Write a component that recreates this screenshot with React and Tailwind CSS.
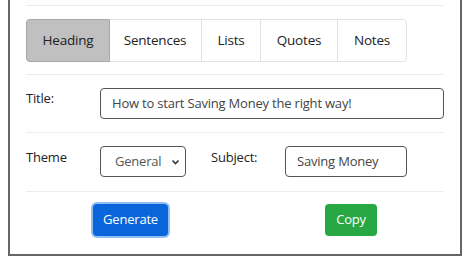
export default function App() {
  const tabs = [
    { label: "Heading", w: "w-[84px]", active: true },
    { label: "Sentences", w: "w-[93px]" },
    { label: "Lists", w: "w-[59px]" },
    { label: "Quotes", w: "w-[77px]" },
    { label: "Notes", w: "w-[68px]" },
  ];
  return (
    <div className="w-[474px] h-[270px] bg-white overflow-hidden text-[13px] tracking-[-0.2px] text-[#333]" style={{ fontFamily: '"Open Sans", "Noto Sans", sans-serif' }}>
      <div className="ml-[8px] w-[454px] h-[256px] border-x-2 border-b-2 border-[#666] border-t-0 pl-[16px] pr-[16px]">
        <div className="h-[6px] border-b border-[#ececec]"></div>
        <div className="pt-[13px] h-[69px] border-b border-[#ececec]">
          <div className="flex w-[381px] h-[43px] border border-[#e2e2e2] rounded-[4px]">
            {tabs.map((t, i) => (
              <div
                key={t.label}
                className={
                  t.w +
                  " flex items-center justify-center text-[13.5px] " +
                  (t.active
                    ? "bg-[#c0c0c0] border border-[#a8a8a8] rounded-l-[4px] -m-px h-[43px] text-[#222]"
                    : "text-[#222] " + (i < tabs.length - 1 ? "border-r border-[#e2e2e2]" : ""))
                }
              >
                {t.label}
              </div>
            ))}
          </div>
        </div>
        <div className="flex h-[58px] border-b border-[#ececec] pt-[13px]">
          <div className="w-[74px] pt-[1px] text-[#222]">Title:</div>
          <div className="w-[344px] h-[31px] border border-[#555] rounded-[4px] flex items-center pl-[11px] text-[#444]">
            How to start Saving Money the right way!
          </div>
        </div>
        <div className="flex h-[59px] border-b border-[#ececec] pt-[13px]">
          <div className="w-[74px] pt-[2px] text-[#222]">Theme</div>
          <div className="w-[86px] h-[31px] border border-[#555] rounded-[4px] flex items-center pl-[14px] text-[#555]">
            <span>General</span>
            <svg className="ml-[10px]" width="9" height="6" viewBox="0 0 9 6">
              <path d="M1.5 1.5 L4.5 4.5 L7.5 1.5" fill="none" stroke="#333" strokeWidth="1.6" />
            </svg>
          </div>
          <div className="w-[99px] pl-[25px] pt-[2px] text-[#222]">Subject:</div>
          <div className="w-[122px] h-[31px] border border-[#555] rounded-[4px] flex items-center pl-[11px] text-[#444]">
            Saving Money
          </div>
        </div>
        <div className="flex pt-[12px]">
          <div className="ml-[67px] w-[75px] h-[32px] rounded-[4px] bg-[#0866da] ring-2 ring-[#8fbdf4] flex items-center justify-center text-white">
            Generate
          </div>
          <div className="ml-[157px] w-[52px] h-[32px] rounded-[4px] bg-[#28a745] flex items-center justify-center text-white">
            Copy
          </div>
        </div>
      </div>
    </div>
  );
}
